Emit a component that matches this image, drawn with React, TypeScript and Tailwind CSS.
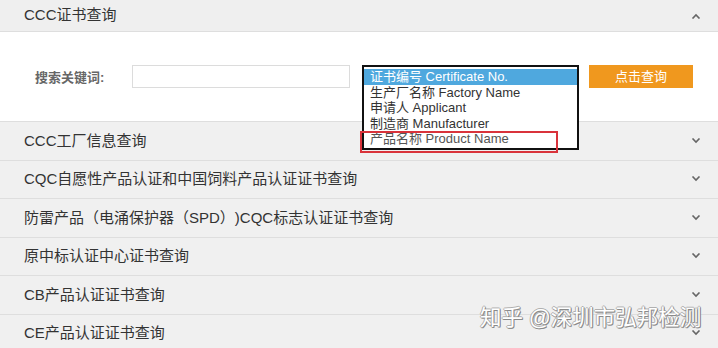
import React from "react";

const font = { fontFamily: '"Liberation Sans", "Noto Sans CJK SC", sans-serif' };

function Chevron({ up = false }: { up?: boolean }) {
  return (
    <svg width="10" height="6" viewBox="0 0 10 6" className="shrink-0">
      <path
        d={up ? "M1.5 5.5 L5 2 L8.5 5.5" : "M1.5 0.5 L5 4 L8.5 0.5"}
        fill="none"
        stroke="#666"
        strokeWidth="1.6"
      />
    </svg>
  );
}

const rows = [
  "CCC工厂信息查询",
  "CQC自愿性产品认证和中国饲料产品认证证书查询",
  "防雷产品（电涌保护器（SPD）)CQC标志认证证书查询",
  "原中标认证中心证书查询",
  "CB产品认证证书查询",
  "CE产品认证证书查询",
];

export default function App() {
  return (
    <div className="relative w-[718px] h-[348px] overflow-hidden bg-[#f0f0f0]" style={font}>
      {/* header */}
      <div className="flex h-[32px] items-center justify-between border-b border-[#dedede] bg-[#efefef] pl-[24px] pr-[17px]">
        <span className="text-[15px] text-[#333] [text-spacing-trim:space-all]">CCC证书查询</span>
        <Chevron up />
      </div>
      {/* body */}
      <div className="h-[89px] bg-white pt-[33px]">
        <div className="flex items-start">
          <div className="w-[132px] pl-[35px] pt-[3px] text-[13px] font-bold text-[#666]">搜索关键词:</div>
          <div className="h-[23px] w-[218px] border border-[#dcdcdc] bg-white" />
          <div className="relative ml-[12px] h-[23px] w-[217px]">
            <div className="absolute left-0 top-0 z-10 h-[85px] w-[217px] border-[2px] border-[#111] bg-white pt-[2px] text-[13px] leading-[15.5px] text-[#333]">
              <div className="bg-[#4fa8de] pl-[6px] text-white">证书编号 Certificate No.</div>
              <div className="pl-[6px]">生产厂名称 Factory Name</div>
              <div className="pl-[6px]">申请人 Applicant</div>
              <div className="pl-[6px]">制造商 Manufacturer</div>
              <div className="pl-[6px] text-[#555]">产品名称 Product Name</div>
            </div>
          </div>
          <div className="ml-[10px] flex h-[23px] w-[104px] items-center justify-center bg-[#f0981e] text-[13px] text-white">
            点击查询
          </div>
        </div>
      </div>
      {/* rows */}
      <div className="flex flex-col">
        {rows.map((r) => (
          <div
            key={r}
            className="flex h-[38.5px] items-center justify-between border-t border-[#dedede] pl-[24px] pr-[17px]"
          >
            <span className="text-[15px] text-[#333] [text-spacing-trim:space-all]">{r}</span>
            <Chevron />
          </div>
        ))}
      </div>
      {/* red highlight */}
      <div className="absolute left-[360px] top-[131px] z-20 h-[22px] w-[198px] border-[2px] border-[#d9333b]" />
      {/* watermark */}
      <div
        className="absolute left-[480px] top-[302px] z-30 text-[21.5px] text-white"
        style={{
          textShadow:
            "1px 1px 0 #8a8a8a, -1px 0 0 #b0b0b0, 0 -1px 0 #b0b0b0, 1px 0 0 #9a9a9a, 0 1px 0 #9a9a9a",
        }}
      >
        知乎 @深圳市弘邦检测
      </div>
    </div>
  );
}
